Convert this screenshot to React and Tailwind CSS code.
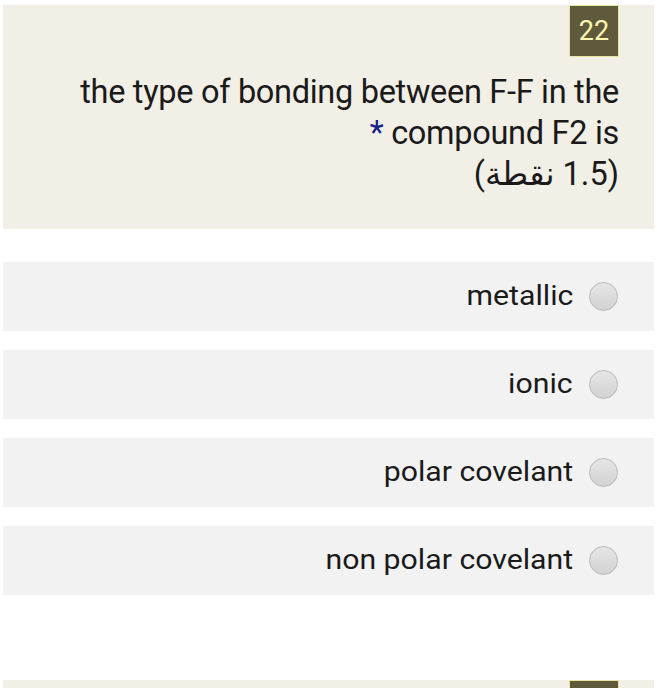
import React from 'react';

const options = ['metallic', 'ionic', 'polar covelant', 'non polar covelant'];

function Radio() {
  return (
    <span className="w-[29px] h-[29px] rounded-full border border-[#b9b9b9] bg-gradient-to-b from-[#e6e6e6] to-[#d2d2d2] shrink-0" />
  );
}

export default function App() {
  return (
    <div className="w-[657px] h-[688px] bg-white overflow-hidden px-[3px] pt-[5px]" style={{ fontFamily: "Roboto, 'DejaVu Sans', sans-serif" }}>
      <div className="bg-[#f2efe6] h-[224px] pr-[35px] flex flex-col items-end">
        <div className="w-[50px] h-[52px] bg-[#5f5a3b] border border-[#e9e2a0] flex items-center justify-center text-[#fff7b2] text-[27px]">
          22
        </div>
        <div className="mt-[15px] text-right text-[#1a1a1a] text-[32.5px] leading-[41px] tracking-[-0.3px]">
          <div>the type of bonding between F-F in the</div>
          <div>
            <span className="text-[#1b1f8a]">*</span> compound F2 is
          </div>
          <div dir="rtl">(1.5 نقطة)</div>
        </div>
      </div>

      <div className="mt-[33px] flex flex-col gap-[19px]">
        {options.map((o) => (
          <div key={o} className="h-[69px] bg-[#f2f2f2] flex items-center justify-end gap-[16px] pr-[36px]">
            <span className="text-[27px] text-[#1a1a1a] scale-x-[1.12] origin-right">{o}</span>
            <Radio />
          </div>
        ))}
      </div>

      <div className="mt-[85px] h-[20px] bg-[#f2efe6] pr-[35px] flex justify-end">
        <div className="w-[50px] h-[20px] bg-[#5f5a3b] border border-[#e9e2a0]" />
      </div>
    </div>
  );
}
